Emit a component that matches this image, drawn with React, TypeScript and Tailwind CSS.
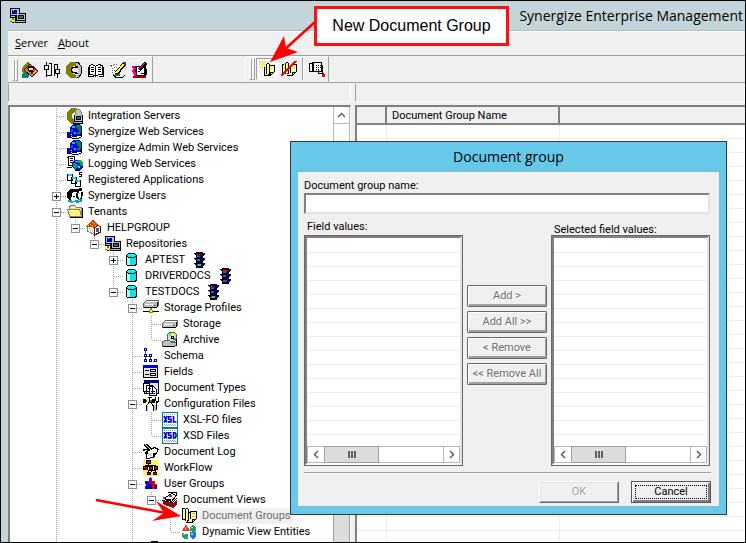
import { ReactNode } from "react";

function Pic({ children, className = "" }: { children: ReactNode; className?: string }) {
  return (
    <svg viewBox="0 0 16 16" width="16" height="16" shapeRendering="crispEdges" className={`shrink-0 ${className}`} aria-hidden="true">
      {children}
    </svg>
  );
}

const NetworkPic = () => (
  <Pic>
    <path fill="#000" d="M0 0h10v8H0zM5 5h11v10H5zM0 8h6v2H0z" />
    <path fill="#c0c0c0" d="M1 1h8v6H1zM7 6h8v6H7zM6 13h9v1H6zM1 8h4v1H1z" />
    <path fill="#0000c0" d="M2 2h5v4H2z" />
    <path fill="#0ff" d="M3 2h1v1H3z" />
    <path fill="#000" d="M8 7h6v4H8z" />
    <path fill="#008080" d="M9 8h4v2H9z" />
    <path fill="#808000" d="M2 10h2v2H2zM0 13h6v1H0z" />
    <path fill="#ff0" d="M2 12h2v2H2z" />
    <path fill="#000" d="M2 14h2v1H2z" />
  </Pic>
);

const DiamondPic = () => (
  <Pic>
    <path fill="#808000" d="M1 4l5-4 3 3-7 9-2-3z" />
    <path fill="#008080" d="M0 12l3-2 4 4-1 2H0z" />
    <path fill="#909090" stroke="#800000" d="M8 2l8 7-6 6-8-7z" />
    <path fill="#e0b0b0" d="M12 7l2 2-4 4-2-2z" />
    <path fill="#000" d="M6 4h5l1 2-1 4H7L6 8z" />
    <path fill="#ff0" d="M7 6h4v2H7z" />
    <path stroke="#800000" d="M5 6l7 7M14 7l-5 5" />
  </Pic>
);

const CablesPic = () => (
  <Pic>
    <path fill="none" stroke="#000" d="M2.500 3v-3M2.500 8v7M0.500 3.500h4v4h-4zM5 1.500h3M7.500 2v11M7.500 13.500h-5M10.500 2.500v11M10 2.500h4M13.500 2v5M11.500 7.500h4v4h-4zM13.500 12v4" />
  </Pic>
);

const WrenchPic = () => (
  <Pic>
    <path fill="#808000" d="M4 0h7v3L6 5v6l4 2v3H4L0 12V4z" />
    <path fill="#c0c0c0" d="M10 1h2l3 3v8l-3 4h-2v-3h2V4h-2z" />
    <path fill="none" stroke="#000" d="M10 0.500h2l3.500 4v7l-3 4h-2M11 5.500H7l-2 2v1l2 2h4M9 4h2v1H9M9 11h2v1" />
  </Pic>
);

const BookPic = () => (
  <Pic>
    <path fill="#fff" stroke="#000" d="M1.500 3.500l3-1 3 2 3-2 4 1v9h-4l-3 2-3-2h-3z" />
    <path fill="none" stroke="#000" d="M7.500 4v10M0.500 5v9h5M15.500 5v9h-5M3 5.500h3M3 7.500h3M3 9.500h3M10 5.500h3M10 7.500h3M10 9.500h3" />
  </Pic>
);

const PenPic = () => (
  <Pic>
    <path fill="#fff" d="M0 3l9-1 1 8-5 4-3-1z" />
    <path fill="none" stroke="#606060" strokeDasharray="1 1" d="M0.500 3.500l8-1M1.500 4l2 9M4 5.500h4M4 8.500h3" />
    <path fill="none" stroke="#000" d="M3 12.500l3 3h6l3-2" />
    <path fill="#008080" d="M5 11h5v3H5z" />
    <path stroke="#000" strokeWidth="4" d="M6 12l9-11" />
    <path stroke="#ff0" strokeWidth="2" d="M6 11l8-9" />
    <path fill="#a0a" d="M14 0h2v3h-2z" />
  </Pic>
);

const NotebookPic = () => (
  <Pic>
    <path fill="#000" d="M3 4h11v10H3zM12 7h3v6h-3z" />
    <path fill="#fff" d="M5 5h7v8H5z" />
    <path fill="#f08" d="M0 4h3v2H0zM1 6h3v2H1zM0 8h3v2H0zM1 10h3v2H1zM2 12h2v3H2z" />
    <path fill="#a00000" d="M1 14h13v2H1z" />
    <path stroke="#000" strokeWidth="3" d="M7 8l7-7" />
    <path stroke="#f0f" d="M7 7l6-6" />
    <path fill="#000" d="M6 9h2v1H6zM9 11h3v1H9z" />
  </Pic>
);

const ClipPic = () => (
  <Pic>
    <path fill="#fffb8c" d="M1 1h5v2h9v9l-3 3H5v-3H1z" />
    <path fill="none" stroke="#000" d="M4 0.500H1.500v11H4M9 3.500h6.500v7l-4 4H5" />
    <path fill="none" stroke="#000" d="M11.500 15v-3.500H15" />
    <path fill="none" stroke="#000" d="M4.500 13V1.500l1-1h1l1 1V12l-1 1h-1M7 4.500h2.500V11" />
    <path stroke="#c8c040" d="M11 5.500h3M11 8.500h3" />
  </Pic>
);

const NewGroupPic = () => (
  <Pic>
    <path fill="#fffb8c" d="M5 4h10v8l-3 3H5z" />
    <path fill="none" stroke="#000" d="M5.500 6v8h3M11 4.500h4.500v6l-4 4H8M11.500 15v-3.500H15" />
    <path fill="none" stroke="#000" d="M7.500 13V3.500l1-1h1l1 1V13l-1 1h-1" />
    <path stroke="#d8c800" strokeDasharray="1 1" d="M0 0.500h2M3.500 0v7M0 3.500h7M1 1l5 5M6 1L1 6" />
    <path fill="#ff0" d="M2 2h3v3H2z" />
  </Pic>
);

const DeleteGroupPic = () => (
  <Pic>
    <path fill="#fffb8c" d="M1 3h14v8l-3 3H5v-2H1z" />
    <path fill="none" stroke="#000" d="M3 3.500H1.500v8H4M10 3.500h5.500v7l-4 4H6M4.500 13V2.500l1-1h1l1 1V12l-1 1M9.500 5v7M11.500 15v-3.500H15" />
    <path stroke="#f00" strokeWidth="2" d="M0 15L15 0" />
  </Pic>
);

const FindPic = () => (
  <Pic>
    <path fill="#fff" stroke="#000" d="M0.500 2.500h3v8h-3zM3.500 1.500h9v9h-9zM4.500 2v9" />
    <path stroke="#000" strokeDasharray="1 1" d="M7 4.500h5M7 6.500h5M7 8.500h3" />
    <path fill="none" stroke="#000" d="M9.500 9v3h3l2 1M13.500 4v8" />
    <path fill="#f00" d="M13 13h3v3h-3z" />
  </Pic>
);

const IntegrationPic = () => (
  <Pic>
    <path fill="#808000" d="M4 0h6v3L5 6v4l3 3v3H4L0 12V4z" />
    <path fill="#c0c0c0" stroke="#808080" d="M8.500 1.500h4l2 3v3h-6z" />
    <path fill="#000" d="M7 7h9v7H7zM6 14h10v2H6z" />
    <path fill="#c0c0c0" d="M8 7h7v6H8zM7 14h8v1H7z" />
    <path fill="#000" d="M9 8h5v4H9z" />
    <path fill="#008080" d="M10 9h3v2h-3z" />
  </Pic>
);

const WebPic = () => (
  <Pic>
    <path fill="#fff" stroke="#000" d="M3.500 11.500h11v1l-3 2h-5l-3-1z" />
    <path fill="#0000c0" d="M0 8h4v6H0z" />
    <path fill="#0000f0" d="M6 0h6l3 3v6l-3 3H6L3 9V3z" />
    <path fill="#108020" d="M9 1h4l1 2v5l-3 3-1-3h2V6l-3-2zM4 5h2v3H4z" />
    <path fill="#40a0ff" d="M5 2h3v2H5zM7 8h2v2H7z" />
    <path fill="#000" d="M5 12h5v1H5zM14 9h1v2h-1z" />
  </Pic>
);

const LogPic = () => (
  <Pic>
    <path fill="#fff" stroke="#000" d="M1.500 0.500h6v9h-6z" />
    <path stroke="#000" d="M3 2.500h3M3 4.500h3M3 6.500h2M0 1.500h1M0 11.500h5" />
    <path fill="#0000f0" d="M7 4h6l3 3v5l-3 2H8l-3-3V6z" />
    <path fill="#00b030" d="M6 7h3l2 3-3 3-2-2zM11 4h2l3 3v3h-2l-1-3h-2z" />
    <path fill="#0ff" d="M8 5h3v1H8zM11 10h2v2h-2z" />
    <path fill="#000" d="M8 14h5v1H8z" />
  </Pic>
);

const AppsPic = () => (
  <Pic>
    <path fill="#fff" stroke="#000" d="M0.500 2.500h5v6h-5zM4.500 5.500h5v6h-5zM8.500 8.500h5v6h-5z" />
    <path fill="#00e0e0" d="M1 2h4v2H1zM5 5h4v2H5zM9 8h4v2H9z" />
    <path fill="none" stroke="#000" d="M15 0.500h-2.500v2h2v2H12" />
  </Pic>
);

const UsersPic = () => (
  <Pic>
    <path fill="#fff" d="M5 4h4v8H4zM11 3h4v8h-4z" />
    <path fill="#000" d="M1 3l2-2h8l2-1h2v3h-3v2h-2L9 4H6L5 6v2L4 9v3H2L0 10V6zM9 5h2v4h1v2h-2L9 9zM14 4h2v4h-1v3h-2v-1h1zM6 8h2v1H6z" />
    <path fill="#00a0b0" d="M1 12h4v1h3v-1h3v-1h4v3h-3v1H9v-1H6v1H3v-1H1z" />
    <path fill="#0ff" d="M7 5h1v1H7zM12 5h1v1h-1zM4 13h2v1H4zM11 12h2v1h-2z" />
  </Pic>
);

const FolderPic = () => (
  <Pic>
    <path fill="#f6e840" stroke="#808080" d="M2.500 12.500v-9l1-2h4l2 2h5v9z" />
    <path fill="#fff568" stroke="#808080" d="M0.500 5.500h12l2 7H3z" />
    <path fill="#fff" d="M3 3h5v1H3zM2 6h9v1H2z" />
    <path stroke="#000" d="M3 13.500h12.500V4" fill="none" />
  </Pic>
);

const HousePic = () => (
  <Pic>
    <path fill="#f0f0f0" stroke="#808080" d="M1.500 6.500h7v8l-7-3z" />
    <path stroke="#b0b0b0" strokeDasharray="1 1" d="M3 8.500h5M4 10.500h4M3 12.500h5" />
    <path fill="#fff" stroke="#800000" d="M8.500 8l3-3 3 2v5l-6 3z" />
    <path fill="#008080" d="M10 8h3v4h-3z" />
    <path fill="#e04000" d="M0 6l7-6 5 4-4 4-2-1H0z" />
    <path fill="#ffe060" d="M6 2h1v1H6zM4 4h1v1H4zM8 3h1v1H8zM6 5h1v1H6zM2 5h1v1H2zM9 5h1v1H9z" />
  </Pic>
);

const DatabasePic = () => (
  <Pic>
    <path fill="#00e8e8" stroke="#000" d="M2.500 3.500l2-2h6l2 2v9l-2 1h-6l-2-1z" />
    <path fill="#a8ffff" d="M3 5h3v8H3z" />
    <path fill="none" stroke="#000" d="M3 4.500l2 1h5l2-1" />
    <path fill="#0ff" d="M4 2h7v2H4z" />
  </Pic>
);

function TrafficPic({ go }: { go: boolean }) {
  return (
    <Pic>
      <path fill="#000030" d="M5 0h7v16H5zM3 1h11v1l-3 3H6L3 2zM3 6h11v1l-3 3H6L3 7zM3 11h11v1l-3 3H6l-3-3z" />
      <path fill="#606060" d="M6 2h3v3H6zM6 7h3v2H6zM6 12h3v2H6z" />
      <path fill="#000090" d="M10 1h1v14h-1z" />
      <path fill={go ? "#900000" : "#f00"} d="M7 2h3v2H7z" />
      <path fill={go ? "#0f0" : "#505050"} d="M7 12h3v2H7z" />
    </Pic>
  );
}

const DrivePic = () => (
  <Pic>
    <path fill="#c0c0c0" stroke="#606060" d="M0.500 7.500l3-3h12v5l-2 2h-13z" />
    <path fill="#fff" d="M3 5h12v1H3zM2 8h8v1H2z" />
    <path fill="#000" d="M1 11h13v1H1zM14 6h1v5h-1z" />
    <path fill="#00a000" d="M11 9h2v1h-2z" />
  </Pic>
);

const SharedDrivePic = () => (
  <Pic>
    <path fill="#c0c0c0" stroke="#606060" d="M0.500 3.500l3-3h12v5l-2 2h-13z" />
    <path fill="#fff" d="M3 1h12v1H3zM2 4h8v1H2z" />
    <path fill="#000" d="M1 7h13v1H1zM14 2h1v5h-1zM0 11h6v1H0zM9 11h7v1H9z" />
    <path fill="#00a000" d="M11 5h2v1h-2z" />
    <path fill="#808000" d="M7 8h2v2H7zM6 10h4v3H6z" />
    <path fill="#ff0" d="M7 10h2v2H7z" />
  </Pic>
);

const DiscPic = () => (
  <Pic>
    <circle cx="10" cy="5" r="5" fill="#d8d8d8" stroke="#606060" />
    <path fill="#ff0" d="M9 1h3v4H9z" />
    <path fill="#0ff" d="M7 1h2v3H7z" />
    <path fill="#0c0" d="M11 6h3v2h-3z" />
    <path fill="#000" d="M9 4h3v3H9z" />
    <path fill="#fff" d="M10 5h1v1h-1z" />
    <path fill="#c0c0c0" stroke="#606060" d="M0.500 9.500l3-1h4l2 2h5v2l-2 2h-12z" />
    <path fill="#000" d="M1 14h12v1H1zM14 7h1v7h-1z" />
  </Pic>
);

const SchemaPic = () => (
  <Pic>
    <path fill="none" stroke="#008080" d="M2.500 3v10M4 8.500h4M7.500 9v5M10 13.500h2" />
    <path fill="#fff" stroke="#000090" d="M1.500 0.500h2v2h-2zM1.500 6.500h2v2h-2zM6.500 6.500h2v2h-2zM1.500 11.500h2v2h-2zM6.500 11.500h2v2h-2zM11.500 11.500h2v2h-2z" />
  </Pic>
);

const FieldsPic = () => (
  <Pic>
    <path fill="#e4e4e4" stroke="#000" d="M0.500 2.500h14v11h-14z" />
    <path fill="#0000f0" d="M0 1h15v3H0z" />
    <path stroke="#000" d="M2 6.500h4M2 10.500h4" />
    <path fill="#fff" stroke="#000" d="M7.500 5.500h5v2h-5zM7.500 9.500h5v2h-5z" />
  </Pic>
);

const TypesPic = () => (
  <Pic>
    <path fill="#e4e4e4" stroke="#000" d="M1.500 1.500h14v12h-14z" />
    <path fill="#000080" d="M1 0h15v3H1z" />
    <path fill="#fff" stroke="#000" d="M0.500 3.500h6v8h-6zM3.500 5.500h6v8h-6zM6.500 6.500h4l3 3v6h-7z" />
    <path stroke="#000080" d="M5 8.500h3M8 11.500h4M8 13.500h4" />
  </Pic>
);

const ConfigPic = () => (
  <Pic>
    <path stroke="#008080" strokeWidth="2" d="M1 5h10" />
    <path fill="#000" d="M0 3h3v4H0zM9 3h3v4H9z" />
    <path fill="#ff0" d="M4 3h3v3H4z" />
    <path fill="none" stroke="#000" d="M5 1.500h4M6.500 2v4l-3 4v5M7.500 6l3 4v5M12.500 1v3l1 2v8M15.500 1v4l-2 2" />
    <path fill="#c0c0c0" d="M4 10h1v5H4zM11 9h2v6h-2z" />
  </Pic>
);

function XsPic({ last }: { last: "L" | "D" }) {
  return (
    <Pic>
      <path fill="#fff" stroke="#008080" d="M0.500 0.500h15v15h-15z" />
      <path stroke="#a0a0a0" strokeDasharray="1 1" d="M2 2.500h12M2 12.500h12M3 13.500h11" />
      <g fill="none" stroke="#0000d0" strokeWidth="1.600" shapeRendering="auto">
        <path d="M2 4l3 6.500M5 4l-3 6.500M9.500 4.700h-3v2.600h2.500v2.600H6" />
        <path d={last === "L" ? "M11.500 4v6h3" : "M11.500 4.700v5.300h1.500l1-1.500v-2.500l-1-1.300z"} />
      </g>
    </Pic>
  );
}

const DocLogPic = () => (
  <Pic>
    <path fill="#fff" stroke="#000" d="M3.500 7.500l8-4 4 2-5 8-7 1z" />
    <path fill="#000" d="M0 5h6v1H0zM0 6h2v1H0zM2 8h3v2H2zM10 9h2v3l-2 2z" />
    <path fill="#c0d8ff" d="M5 9h4v3H5z" />
    <path stroke="#000" strokeWidth="3" d="M2 0l6 6" />
    <path stroke="#ff0" d="M2 0l6 6" />
  </Pic>
);

const FlowPic = () => (
  <Pic>
    <path fill="#fff27a" d="M0 0h16v16H0z" />
    <path fill="none" stroke="#000" d="M5.500 3v4M2.500 7V5.500h10V7M8.500 9v3M5.500 12v-1.500h7V12" />
    <path fill="#d0004c" stroke="#000" d="M3.500 0.500h4v3h-4zM0.500 6.500h4v3h-4zM6.500 6.500h3v3h-3zM11.500 6.500h3v3h-3zM4.500 12.500h3v2h-3zM10.500 12.500h3v2h-3z" />
  </Pic>
);

const PeoplePic = () => (
  <Pic>
    <path fill="#800080" d="M6 2h3v3h2v5H4V5h2z" />
    <path fill="#0000e0" d="M2 5h3v3h2v5H2v-3h1V8H2z" />
    <path fill="#e00000" d="M9 5h3v3h2v5H8V9h1z" />
    <path fill="#00008c" d="M5 9h4v4H5zM12 9h2v4h-2z" />
    <path fill="#c0c" d="M7 1h1v2H7z" />
  </Pic>
);

const ViewsPic = () => (
  <Pic>
    <path fill="#c00000" d="M1 8l10 3 4-4v5l-4 4-9-3z" />
    <path fill="#fff" stroke="#000" d="M3.500 5.500l6-4 5 2-5 6-6-2z" />
    <path fill="#f06" d="M7 3h3v2H7zM1 5h2v2H1z" />
    <path fill="none" stroke="#000" d="M0 8l10 3 5-5M1 11l10 3 4-4M6 1l8-1 1 3" />
    <path fill="#000" d="M4 7h5v2H4z" />
  </Pic>
);

const EntitiesPic = () => (
  <Pic>
    <path fill="#e04020" d="M5 0l4 7H1z" />
    <path fill="#f6a080" d="M4 3h1v3H4z" />
    <path fill="#20a060" d="M9 3l3-2 3 2v4l-3 1-3-1zM1 9l3 1h3v5H4L1 13z" />
    <path fill="#90e0a0" d="M10 3h2v1h-2zM2 10h2v1H2z" />
    <path fill="#2070d0" d="M9 8h6v5l-3 2-3-2z" />
    <path fill="#90c8ff" d="M10 9h2v2h-2z" />
  </Pic>
);

const LastPic = () => (
  <Pic>
    <path fill="#c0c0c0" stroke="#000" d="M7.500 2.500l1-1h6l1 1v12h-8z" />
  </Pic>
);

type Row = {
  label: string;
  // one character per level: "|" line, "+" branch, "L" last branch, "." nothing
  guides: string;
  icon: ReactNode;
  open?: boolean;
  light?: "go" | "stop";
  selected?: boolean;
};

const ROWS: Row[] = [
  { label: "Integration Servers", guides: "+", icon: <IntegrationPic /> },
  { label: "Synergize Web Services", guides: "+", icon: <WebPic /> },
  { label: "Synergize Admin Web Services", guides: "+", icon: <WebPic /> },
  { label: "Logging Web Services", guides: "+", icon: <LogPic /> },
  { label: "Registered Applications", guides: "+", icon: <AppsPic /> },
  { label: "Synergize Users", guides: "+", icon: <UsersPic />, open: false },
  { label: "Tenants", guides: "+", icon: <FolderPic />, open: true },
  { label: "HELPGROUP", guides: "|L", icon: <HousePic />, open: true },
  { label: "Repositories", guides: "|.L", icon: <NetworkPic />, open: true },
  { label: "APTEST", guides: "|..+", icon: <DatabasePic />, open: false, light: "go" },
  { label: "DRIVERDOCS", guides: "|..+", icon: <DatabasePic />, light: "stop" },
  { label: "TESTDOCS", guides: "|..L", icon: <DatabasePic />, open: true, light: "go" },
  { label: "Storage Profiles", guides: "|...+", icon: <SharedDrivePic />, open: true },
  { label: "Storage", guides: "|...|+", icon: <DrivePic /> },
  { label: "Archive", guides: "|...|L", icon: <DiscPic /> },
  { label: "Schema", guides: "|...+", icon: <SchemaPic /> },
  { label: "Fields", guides: "|...+", icon: <FieldsPic /> },
  { label: "Document Types", guides: "|...+", icon: <TypesPic /> },
  { label: "Configuration Files", guides: "|...+", icon: <ConfigPic />, open: true },
  { label: "XSL-FO files", guides: "|...|+", icon: <XsPic last="L" /> },
  { label: "XSD Files", guides: "|...|L", icon: <XsPic last="D" /> },
  { label: "Document Log", guides: "|...+", icon: <DocLogPic /> },
  { label: "WorkFlow", guides: "|...+", icon: <FlowPic /> },
  { label: "User Groups", guides: "|...+", icon: <PeoplePic />, open: true },
  { label: "Document Views", guides: "|...|L", icon: <ViewsPic />, open: true },
  { label: "Document Groups", guides: "|...|.+", icon: <ClipPic />, selected: true },
  { label: "Dynamic View Entities", guides: "|...|.L", icon: <EntitiesPic /> },
  { label: "", guides: "|...+", icon: <LastPic /> },
];

function Guide({ kind, open }: { kind: string; open?: boolean }) {
  return (
    <svg viewBox="0 0 19 16" width="19" height="16" shapeRendering="crispEdges" aria-hidden="true">
      <g stroke="#a0a0a0" strokeDasharray="1 1">
        {(kind === "|" || kind === "+") && <path d="M9.500 0v16" />}
        {kind === "L" && <path d="M9.500 0v8" />}
        {(kind === "+" || kind === "L") && <path d="M10 8.500h9" />}
      </g>
      {open !== undefined && (
        <>
          <path fill="#fff" stroke="#919191" d="M5.500 4.500h8v8h-8z" />
          <path stroke="#000" d={open ? "M7 8.500h5" : "M7 8.500h5M9.500 6v5"} />
        </>
      )}
    </svg>
  );
}

function TreeRow({ row }: { row: Row }) {
  const depth = row.guides.length;
  return (
    <li className="flex h-4 items-center">
      {row.guides.split("").map((kind, i) =>
        i === depth - 1 && row.open !== undefined ? (
          <button key={i} aria-label={`${row.open ? "Collapse" : "Expand"} ${row.label}`}>
            <Guide kind={kind} open={row.open} />
          </button>
        ) : (
          <Guide key={i} kind={kind} />
        )
      )}
      <span className="pl-px">{row.icon}</span>
      <span className={`ml-[3px] h-4 px-0.5 leading-4 whitespace-nowrap ${row.selected ? "bg-[#f0f0f0] text-[#6d6d6d]" : ""}`}>
        {row.label}
      </span>
      {row.light && <span className="ml-1"><TrafficPic go={row.light === "go"} /></span>}
    </li>
  );
}

function ToolButton({ label, pressed, children }: { label: string; pressed?: boolean; children: ReactNode }) {
  return (
    <button
      aria-label={label}
      className={`flex h-[22px] w-[22px] items-center justify-center border ${pressed ? "border-[#a0a0a0] border-r-white border-b-white bg-[#f7f7f7]" : "border-transparent"}`}
    >
      {children}
    </button>
  );
}

function Gripper() {
  return (
    <div className="mr-px flex h-[22px]">
      <div className="w-[3px] border border-[#a0a0a0] border-t-white border-l-white" />
      <div className="w-[3px] border border-[#a0a0a0] border-t-white border-l-white" />
    </div>
  );
}

function Chevron({ d }: { d: string }) {
  return (
    <svg viewBox="0 0 9 9" width="9" height="9" fill="none" stroke="#606060" strokeWidth="1.500" aria-hidden="true">
      <path d={d} />
    </svg>
  );
}

function FieldList({ id }: { id: string }) {
  return (
    <div id={id} role="listbox" aria-labelledby={`${id}-label`} className="flex h-[231px] flex-col border border-[#696969] bg-white">
      <div className="flex flex-1 flex-col border-2 border-[#808080] border-r-[#e3e3e3] border-b-white">
        <div className="mt-px flex-1 bg-[repeating-linear-gradient(#fff_0px,#fff_13px,#ececec_13px,#ececec_14px)]" />
        <div className="flex h-[17px] border border-[#b8b8b8]">
          <button aria-label="Scroll left" className="flex w-4 items-center justify-center">
            <Chevron d="M6 1L2.500 4.500 6 8" />
          </button>
          <div className="-my-px flex w-[55px] items-center justify-center gap-px border border-[#a0a0a0] bg-[#dcdcdc]">
            <span className="h-[7px] w-0.5 bg-[#606060]" />
            <span className="h-[7px] w-0.5 bg-[#606060]" />
            <span className="h-[7px] w-0.5 bg-[#606060]" />
          </div>
          <button aria-label="Scroll right" className="ml-auto flex w-4 items-center justify-center border-l border-[#b8b8b8]">
            <Chevron d="M3 1l3.500 3.500L3 8" />
          </button>
        </div>
      </div>
    </div>
  );
}

function MoveButton({ children }: { children: ReactNode }) {
  return (
    <button disabled className="h-[22px] w-full rounded-[1px] border border-[#696969] whitespace-nowrap text-[#6d6d6d] shadow-[inset_1px_1px_#fff,inset_-1px_-2px_#a0a0a0] [text-shadow:1px_1px_#fff]">
      {children}
    </button>
  );
}

function GroupDialog() {
  return (
    <section
      role="dialog"
      aria-labelledby="dialog-title"
      className="absolute top-[140px] left-[289px] w-[437px] border border-[#2d3a40] bg-[#66c9ea] px-[7px] pb-[7px]"
    >
      <h2 id="dialog-title" className="h-[29px] text-center font-['Open_Sans',sans-serif] text-[14px] leading-[30px]">
        Document group
      </h2>
      <div className="border-y border-[#8fb4c2] bg-[#f0f0f0] pt-1.5 pr-2 pb-[3px] pl-1.5">
        <label htmlFor="group-name" className="block h-[15px] leading-4">Document group name:</label>
        <div className="pr-px">
          <input id="group-name" className="block h-[21px] w-full border-2 border-[#808080] border-r-[#e3e3e3] border-b-[#e3e3e3] bg-white px-1 outline-none" />
        </div>
        <div className="flex justify-between pr-px">
          <div className="w-[159px]">
            <div id="available-label" className="h-[21px] pl-[3px] leading-[26px]">Field values:</div>
            <FieldList id="available" />
          </div>
          <div className="flex w-20 flex-col gap-1 pt-[71px]">
            <MoveButton>Add &gt;</MoveButton>
            <MoveButton>Add All &gt;&gt;</MoveButton>
            <MoveButton>&lt; Remove</MoveButton>
            <MoveButton>&lt;&lt; Remove All</MoveButton>
          </div>
          <div className="w-[159px]">
            <div id="selected-label" className="h-[21px] pl-[3px] leading-[32px]">Selected field values:</div>
            <FieldList id="selected" />
          </div>
        </div>
        <hr className="mt-1.5 border-t border-b border-t-[#a0a0a0] border-b-white" />
        <div className="flex justify-end gap-3 pt-[7px]">
          <button disabled className="h-[22px] w-20 border border-white border-r-[#696969] border-b-[#696969] text-[#a0a0a0] shadow-[inset_1px_1px_#e3e3e3,inset_-1px_-1px_#a0a0a0] [text-shadow:1px_1px_#fff]">
            OK
          </button>
          <button className="h-[22px] w-20 border border-[#555] p-[3px] leading-3 shadow-[inset_1px_1px_#fff,inset_-2px_-2px_#808080]">
            <span className="flex h-full items-center justify-center border border-dotted border-black">Cancel</span>
          </button>
        </div>
      </div>
    </section>
  );
}

export default function App() {
  return (
    <main className="relative flex h-screen flex-col overflow-hidden border border-black bg-[#c3d5db] pl-[7px] font-['Roboto','Liberation_Sans',sans-serif] text-[11px] text-black">
      <header className="flex h-[29px] shrink-0 items-center justify-between pr-0.5 pl-0.5">
        <NetworkPic />
        <h1 className="font-['Open_Sans',sans-serif] text-[14px] whitespace-nowrap">Synergize Enterprise Management</h1>
      </header>

      <div className="flex min-h-0 flex-1 flex-col border-t border-[#aebfc5] bg-[#f0f0f0]">
        <nav className="flex h-6 shrink-0 items-center gap-2.5 border-t border-white pl-[7px] font-['Open_Sans',sans-serif] text-[11px]">
          <button><u>S</u>erver</button>
          <button><u>A</u>bout</button>
        </nav>

        <div className="flex h-7 shrink-0 border-y border-[#a0a0a0]">
          <div className="flex w-[145px] items-center border-t border-r border-t-white border-r-[#a0a0a0] pl-1">
            <Gripper />
            <ToolButton label="Repositories"><DiamondPic /></ToolButton>
            <ToolButton label="Connections"><CablesPic /></ToolButton>
            <ToolButton label="Settings"><WrenchPic /></ToolButton>
            <ToolButton label="Dictionary"><BookPic /></ToolButton>
            <ToolButton label="Edit"><PenPic /></ToolButton>
            <ToolButton label="Log"><NotebookPic /></ToolButton>
          </div>
          <div className="ml-[92px] flex items-center border border-white border-r-[#a0a0a0] border-b-transparent pl-[3px]">
            <Gripper />
            <ToolButton label="New Document Group" pressed><NewGroupPic /></ToolButton>
            <ToolButton label="Delete Document Group"><DeleteGroupPic /></ToolButton>
            <div className="mx-0.5 h-[22px] w-0.5 border-l border-[#a0a0a0] bg-white" />
            <ToolButton label="Find"><FindPic /></ToolButton>
          </div>
        </div>

        <div className="flex h-[22px] shrink-0 gap-1 pb-[3px]">
          <div className="w-[343px] border border-white border-t-transparent border-l-[#a0a0a0]" />
          <div className="flex-1 border border-white border-t-transparent border-l-[#a0a0a0]" />
        </div>

        <div className="flex min-h-0 flex-1 gap-1">
          <aside className="flex w-[343px] overflow-hidden border-t-2 border-r border-l-2 border-[#808080] border-r-white bg-white">
            <ul className="flex-1 overflow-hidden pt-px pl-[37px]">
              {ROWS.map((row, i) => <TreeRow key={i} row={row} />)}
            </ul>
            <div className="flex w-[17px] flex-col border-x border-[#b8b8b8]">
              <button aria-label="Scroll up" className="flex h-[17px] items-center justify-center border-b border-[#b8b8b8]">
                <Chevron d="M1 6l3.500-3.500L8 6" />
              </button>
              <div className="-mx-px mt-auto h-14 border-x border-t border-[#a0a0a0] bg-[#dcdcdc]" />
            </div>
          </aside>

          <section className="flex flex-1 flex-col border-t-2 border-l-2 border-[#808080] bg-white">
            <table className="w-full table-fixed border-collapse text-left">
              <thead>
                <tr className="h-[17px] border-b-2 border-[#808080] bg-[#f0f0f0]">
                  <th className="w-[29px] border-r-2 border-[#808080] p-0" />
                  <th className="w-[173px] border-r-2 border-[#808080] p-0 pl-[5px] leading-[15px] font-normal">Document Group Name</th>
                  <th className="p-0" />
                </tr>
              </thead>
            </table>
            <div className="flex flex-1 bg-[repeating-linear-gradient(#fff_0px,#fff_13px,#ececec_13px,#ececec_14px)]">
              <div className="w-[30px] border-r border-[#ececec]" />
              <div className="w-[173px] border-r border-[#ececec]" />
            </div>
          </section>
        </div>
      </div>

      <GroupDialog />

      <div className="absolute top-[5px] left-[313px] flex h-10 w-[195px] items-center justify-center border-[3px] border-[#ff1010] bg-white font-['Liberation_Sans',sans-serif] text-[16px] whitespace-nowrap">
        New Document Group
      </div>
      <svg className="pointer-events-none absolute top-0 left-0" width="330" height="530" viewBox="1 1 330 530" fill="#f00" aria-hidden="true">
        <path stroke="#f00" strokeWidth="2.500" d="M315 22L284 50" />
        <path d="M270 62l14-26 2 12 12 4z" />
        <path stroke="#f00" strokeWidth="2.500" d="M96 500l70 13" />
        <path d="M181 516l-25-15 8 12-12 8z" />
      </svg>
    </main>
  );
}
